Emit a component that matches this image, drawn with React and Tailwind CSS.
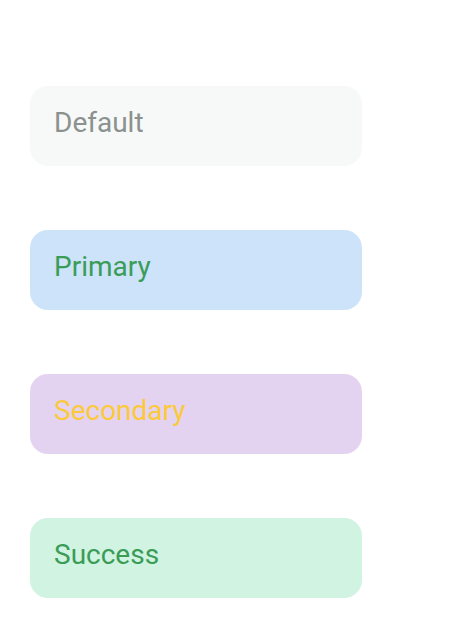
export default function App() {
  const items = [
    { label: "Default", bg: "bg-[#f7f9f8]", fg: "text-[#8a918e]" },
    { label: "Primary", bg: "bg-[#cce3f9]", fg: "text-[#3a9c57]" },
    { label: "Secondary", bg: "bg-[#e3d3f1]", fg: "text-[#fbc93a]" },
    { label: "Success", bg: "bg-[#d1f3e2]", fg: "text-[#3a9c57]" },
  ];
  return (
    <div className="min-h-[628px] w-[456px] bg-white pt-[86px] pl-[30px] flex flex-col gap-[64px]" style={{ fontFamily: "Roboto, sans-serif" }}>
      {items.map((it) => (
        <div key={it.label} className={`w-[332px] h-[80px] rounded-[18px] px-6 pt-[21px] ${it.bg}`}>
          <div className={`text-[28px] leading-[32px] ${it.fg}`}>{it.label}</div>
        </div>
      ))}
    </div>
  );
}
